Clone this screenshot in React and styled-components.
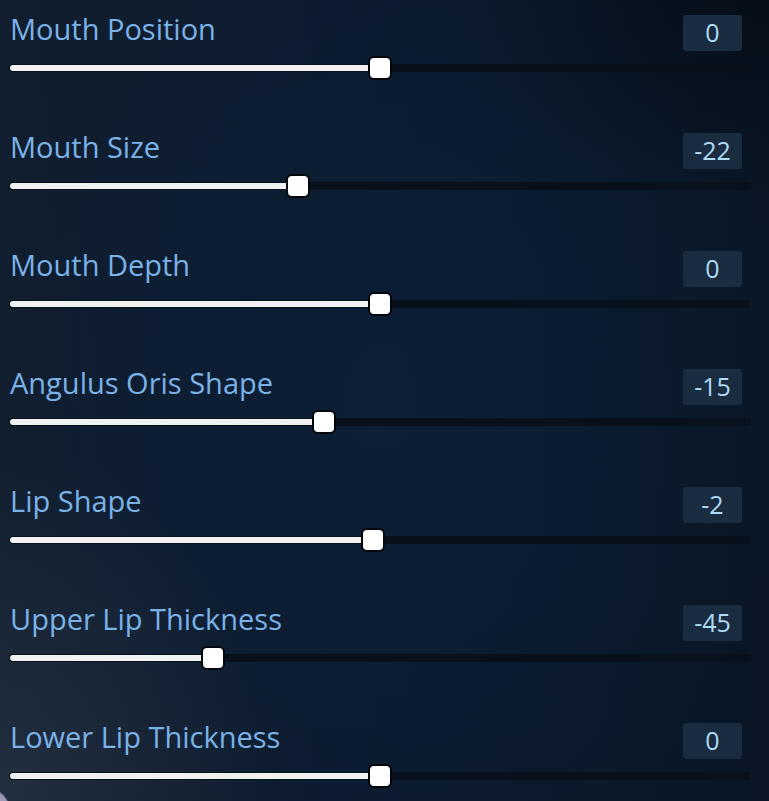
import React from "react";
import styled, { createGlobalStyle } from "styled-components";

const GlobalStyle = createGlobalStyle`
  html, body {
    margin: 0;
    padding: 0;
    background: #0b1a2d;
  }
  body {
    font-family: "Open Sans", "Noto Sans", sans-serif;
  }
`;

const Panel = styled.div`
  box-sizing: border-box;
  width: 769px;
  height: 801px;
  overflow: hidden;
  padding: 0 18px 0 9px;
  background:
    radial-gradient(circle at -14px 812px, #9c99b8 0 23px, rgba(156, 153, 184, 0) 25px),
    radial-gradient(ellipse 380px 480px at 0% 100%, rgba(52, 64, 80, 0.5), rgba(52, 64, 80, 0) 75%),
    radial-gradient(ellipse 300px 200px at 100% 0%, rgba(4, 10, 18, 0.7), rgba(4, 10, 18, 0) 100%),
    radial-gradient(ellipse 460px 600px at 50% 50%, #0c1f36, rgba(12, 31, 54, 0) 90%),
    linear-gradient(90deg, #111e2f 0%, #0c1a2d 45%, #0a1829 80%, #0a1625 100%);
`;

const Row = styled.div`
  box-sizing: border-box;
  height: 118px;
  padding-top: 15px;
`;

const Header = styled.div`
  display: flex;
  justify-content: space-between;
  align-items: flex-start;
  height: 36px;
  padding-right: 9px;
`;

const Label = styled.div`
  font-size: 29px;
  line-height: 29px;
  margin-top: -1px;
  padding-left: 1px;
  color: #7ab2e8;
  white-space: nowrap;
`;

const ValueBox = styled.div`
  width: 59px;
  height: 36px;
  border-radius: 3px;
  background: #1a2c40;
  color: #afdaf5;
  font-size: 25px;
  line-height: 35px;
  text-align: center;
`;

const Track = styled.div`
  position: relative;
  height: 22px;
  margin-top: 6px;
  display: flex;
  align-items: center;
`;

const Groove = styled.div`
  position: relative;
  flex: 1;
  height: 8px;
  border-radius: 4px;
  background: #08111b;
`;

const Fill = styled.div`
  position: absolute;
  left: 1px;
  top: 1px;
  height: 6px;
  border-radius: 3px;
  background: #f1f1f1;
`;

const Thumb = styled.div`
  position: absolute;
  top: -1px;
  box-sizing: border-box;
  width: 24px;
  height: 24px;
  margin-left: -12px;
  border: 2px solid #04070b;
  border-radius: 6px;
  background: #ffffff;
`;

const sliders = [
  { label: "Mouth Position", value: 0 },
  { label: "Mouth Size", value: -22 },
  { label: "Mouth Depth", value: 0 },
  { label: "Angulus Oris Shape", value: -15 },
  { label: "Lip Shape", value: -2 },
  { label: "Upper Lip Thickness", value: -45 },
  { label: "Lower Lip Thickness", value: 0 },
];

const Slider = ({ label, value }) => {
  const pct = ((value + 100) / 200) * 100;
  return (
    <Row>
      <Header>
        <Label>{label}</Label>
        <ValueBox>{value}</ValueBox>
      </Header>
      <Track>
        <Groove>
          <Fill style={{ width: `calc(${pct}% - 1px)` }} />
        </Groove>
        <Thumb style={{ left: `${pct}%` }} />
      </Track>
    </Row>
  );
};

const App = () => (
  <>
    <GlobalStyle />
    <Panel>
      {sliders.map(s => (
        <Slider key={s.label} label={s.label} value={s.value} />
      ))}
    </Panel>
  </>
);

export default App;
